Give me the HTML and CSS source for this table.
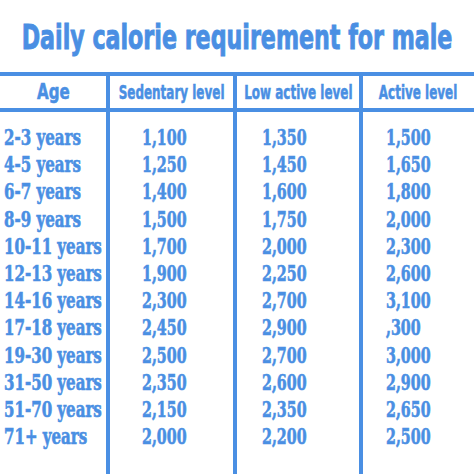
FILE: index.html
```html
<!DOCTYPE html>
<html>
<head>
<meta charset="utf-8">
<link rel="stylesheet" href="styles.css">
</head>
<body>
<div class="page">
  <h1 class="title"><span>Daily calorie requirement for male</span></h1>
  <div class="table">
    <div class="head age"><span>Age</span></div>
    <div class="head c2"><span>Sedentary level</span></div>
    <div class="head c3"><span>Low active level</span></div>
    <div class="head c4"><span>Active level</span></div>
    <div class="col age-col">
      <div class="cell">2-3 years</div>
      <div class="cell">4-5 years</div>
      <div class="cell">6-7 years</div>
      <div class="cell">8-9 years</div>
      <div class="cell">10-11 years</div>
      <div class="cell">12-13 years</div>
      <div class="cell">14-16 years</div>
      <div class="cell">17-18 years</div>
      <div class="cell">19-30 years</div>
      <div class="cell">31-50 years</div>
      <div class="cell">51-70 years</div>
      <div class="cell">71+ years</div>
    </div>
    <div class="col num c2">
      <div class="cell">1,100</div>
      <div class="cell">1,250</div>
      <div class="cell">1,400</div>
      <div class="cell">1,500</div>
      <div class="cell">1,700</div>
      <div class="cell">1,900</div>
      <div class="cell">2,300</div>
      <div class="cell">2,450</div>
      <div class="cell">2,500</div>
      <div class="cell">2,350</div>
      <div class="cell">2,150</div>
      <div class="cell">2,000</div>
    </div>
    <div class="col num c3">
      <div class="cell">1,350</div>
      <div class="cell">1,450</div>
      <div class="cell">1,600</div>
      <div class="cell">1,750</div>
      <div class="cell">2,000</div>
      <div class="cell">2,250</div>
      <div class="cell">2,700</div>
      <div class="cell">2,900</div>
      <div class="cell">2,700</div>
      <div class="cell">2,600</div>
      <div class="cell">2,350</div>
      <div class="cell">2,200</div>
    </div>
    <div class="col num c4">
      <div class="cell">1,500</div>
      <div class="cell">1,650</div>
      <div class="cell">1,800</div>
      <div class="cell">2,000</div>
      <div class="cell">2,300</div>
      <div class="cell">2,600</div>
      <div class="cell">3,100</div>
      <div class="cell">,300</div>
      <div class="cell">3,000</div>
      <div class="cell">2,900</div>
      <div class="cell">2,650</div>
      <div class="cell">2,500</div>
    </div>
  </div>
</div>
</body>
</html>
```

FILE: styles.css
```css
html, body {
  margin: 0;
  padding: 0;
  background: #ffffff;
}
.page {
  width: 474px;
  height: 474px;
  overflow: hidden;
  display: flex;
  flex-direction: column;
  color: #4a8fe3;
}
.title {
  margin: 0;
  height: 72px;
  display: flex;
  align-items: center;
  justify-content: center;
  font-family: "DejaVu Sans Condensed", "DejaVu Sans", sans-serif;
  font-weight: bold;
  font-size: 34px;
  white-space: nowrap;
}
.title span {
  display: inline-block;
  transform: scaleX(0.725);
  -webkit-text-stroke: 0.9px #4a8fe3;
  padding-top: 2px;
}
.table {
  flex: 1;
  display: grid;
  grid-template-columns: 106px 127px 126px 115px;
  grid-template-rows: 40px 1fr;
}
.head {
  border-top: 4px solid #4a8fe3;
  border-bottom: 4px solid #4a8fe3;
  display: flex;
  align-items: center;
  justify-content: center;
  font-family: "DejaVu Sans Condensed", "DejaVu Sans", sans-serif;
  font-weight: bold;
  font-size: 19px;
  white-space: nowrap;
}
.head span {
  display: inline-block;
  transform: scaleX(0.7);
  -webkit-text-stroke: 0.5px #4a8fe3;
}
.head.age {
  font-size: 21px;
}
.head.age span {
  transform: scaleX(0.8);
}
.c2, .c3, .c4 {
  border-left: 4px solid #4a8fe3;
}
.col {
  padding-top: 12px;
  display: flex;
  flex-direction: column;
  font-family: "DejaVu Serif Condensed", "DejaVu Serif", serif;
  font-weight: bold;
  font-size: 22px;
  white-space: nowrap;
}
.cell {
  height: 27.2px;
  line-height: 27.2px;
  transform-origin: left center;
  transform: scaleX(0.72);
  -webkit-text-stroke: 0.6px #4a8fe3;
}
.age-col .cell {
  transform: scaleX(0.76);
}
.age-col {
  padding-left: 4px;
}
.num.c2 { padding-left: 32px; }
.num.c3 { padding-left: 25px; }
.num.c4 { padding-left: 23px; }
```
